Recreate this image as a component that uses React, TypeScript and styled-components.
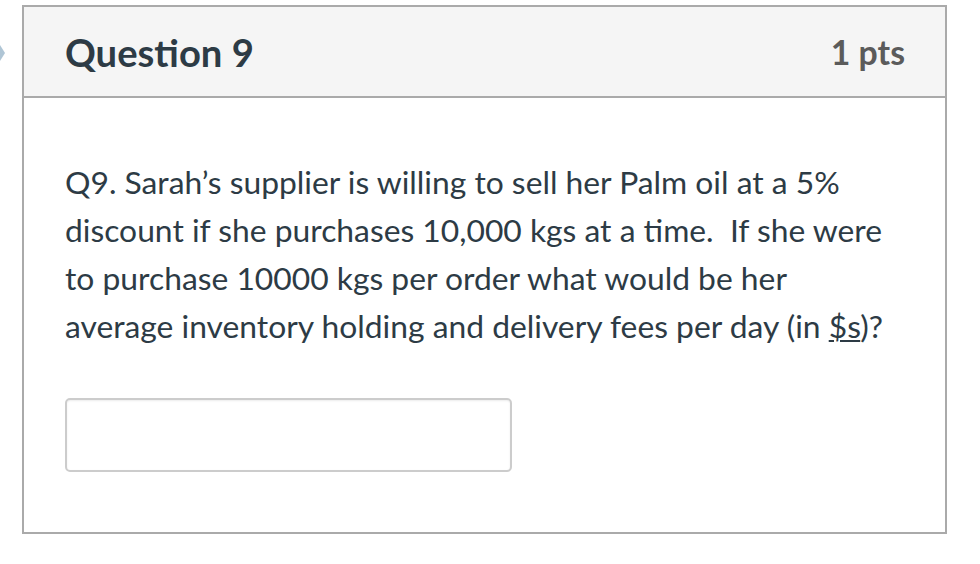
import React from "react";
import styled, { createGlobalStyle } from "styled-components";

const GlobalStyle = createGlobalStyle`
  html, body {
    margin: 0;
    padding: 0;
    background: #ffffff;
  }
  body {
    font-family: Lato, "Liberation Sans", sans-serif;
    color: #2d3b45;
  }
`;

/* ================== STYLES ================== */

const Page = styled.div`
  display: flex;
  align-items: flex-start;
  padding-top: 5px;
  width: 980px;
  height: 564px;
  box-sizing: border-box;
`;

const Gutter = styled.div`
  width: 22px;
  flex: none;
  display: flex;
  justify-content: flex-start;
  padding-top: 37px;
`;

const QuestionCard = styled.section`
  width: 925px;
  flex: none;
  box-sizing: border-box;
  border: 2px solid #aaaaaa;
  background: #ffffff;
`;

const CardHeader = styled.header`
  display: flex;
  align-items: center;
  justify-content: space-between;
  height: 89px;
  padding: 0 40px 0 41px;
  background: #f5f5f5;
  border-bottom: 2px solid #aaaaaa;
`;

const Title = styled.h2`
  margin: 0;
  font-size: 38.2px;
  font-weight: 700;
  color: #2d3b45;
`;

const Points = styled.div`
  font-size: 33.8px;
  font-weight: 700;
  color: #5b5b5b;
`;

const CardBody = styled.div`
  padding: 60px 41px 60px 41px;
`;

const QuestionText = styled.p`
  margin: 0;
  font-size: 31.8px;
  line-height: 48px;
  color: #2d3b45;
`;

const Unit = styled.span`
  text-decoration: underline;
  text-decoration-thickness: 2px;
  text-underline-offset: 2px;
`;

const AnswerInput = styled.input`
  display: block;
  margin-top: 48px;
  width: 447px;
  height: 74px;
  box-sizing: border-box;
  border: 2px solid #cccccc;
  border-radius: 5px;
  box-shadow: inset 0 1px 2px rgba(0, 0, 0, 0.08);
  background: #ffffff;
  outline: none;
`;

/* ================== COMPONENT ================== */

const NavMarker = () => (
  <svg width="8" height="22" viewBox="0 0 8 22">
    <path d="M0 3 L5 11 L0 19 Z" fill="#9bb7cb" opacity="0.8" />
  </svg>
);

export default function App() {
  return (
    <>
      <GlobalStyle />
      <Page>
        <Gutter>
          <NavMarker />
        </Gutter>
        <QuestionCard>
          <CardHeader>
            <Title>Question 9</Title>
            <Points>1 pts</Points>
          </CardHeader>
          <CardBody>
            <QuestionText>
              Q9. Sarah’s supplier is willing to sell her Palm oil at a 5%
              <br />
              discount if she purchases 10,000 kgs at a time.&nbsp; If she were
              <br />
              to purchase 10000 kgs per order what would be her
              <br />
              average inventory holding and delivery fees per day (in <Unit>$s</Unit>)?
            </QuestionText>
            <AnswerInput type="text" aria-label="Answer" />
          </CardBody>
        </QuestionCard>
      </Page>
    </>
  );
}
